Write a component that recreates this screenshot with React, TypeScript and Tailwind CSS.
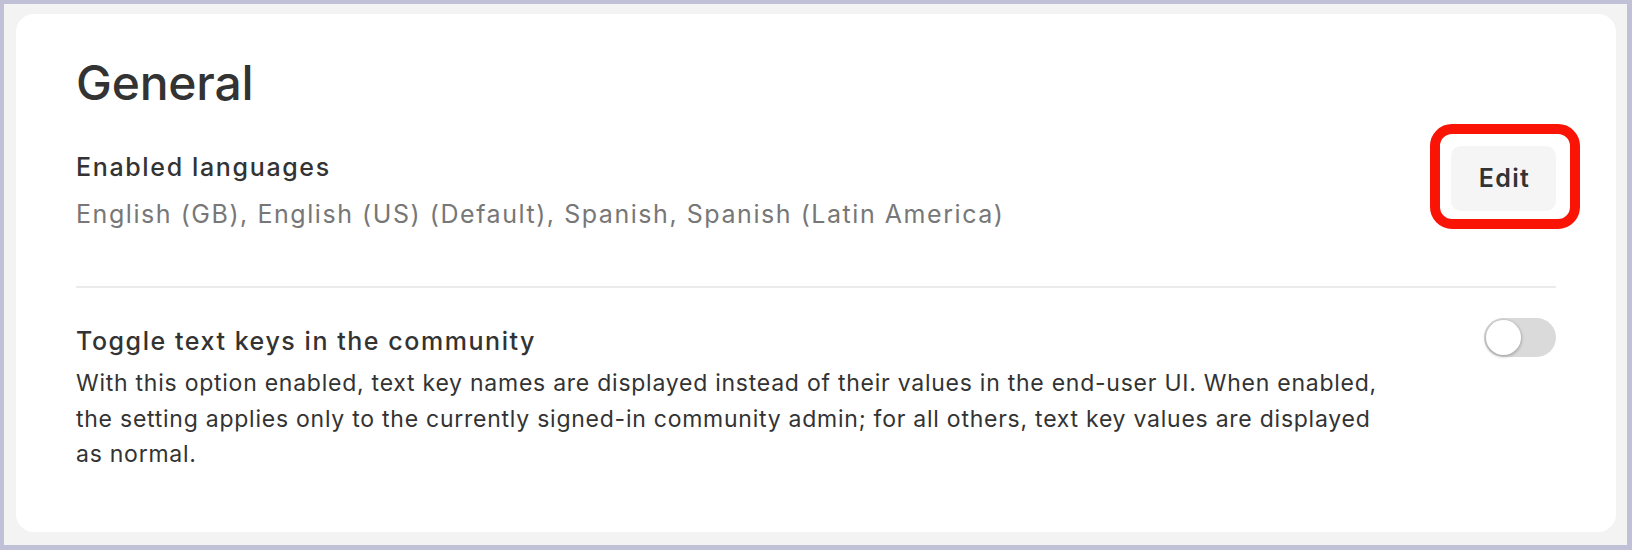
import { useState } from "react";

function Toggle() {
  const [on, setOn] = useState(false);
  return (
    <button
      onClick={() => setOn(!on)}
      className={`flex h-[39px] w-[72px] shrink-0 items-center rounded-full px-[2px] ${on ? "justify-end bg-[#2f6fed]" : "justify-start bg-[#dadada]"}`}
    >
      <span className="h-[35px] w-[35px] rounded-full bg-white shadow-[0_1px_3px_1px_rgba(0,0,0,0.22)]" />
    </button>
  );
}

export default function App() {
  return (
    <div className="h-[550px] w-[1632px] border-t-4 border-r-[5px] border-b-[5px] border-l-4 border-[#c0c0d6] bg-[#f3f3f3] pt-[10px] pr-[11px] pb-[13px] pl-3 font-['Inter',sans-serif] text-[#333333]">
      <div className="h-full rounded-[18px] bg-white px-[60px] pt-[40px]">
        <h1 className="text-[48px] font-medium leading-[58px] tracking-[-0.2px]">General</h1>

        <div className="mt-[34px] flex items-start justify-between border-b-2 border-[#ebebeb] pb-[54px]">
          <div className="pt-[3px]">
            <p className="text-[25px] font-medium leading-[36px] tracking-[1.65px]">Enabled languages</p>
            <p className="mt-[11px] text-[25px] leading-[36px] tracking-[1.55px] text-[#777777]">
              English (GB), English (US) (Default), Spanish, Spanish (Latin America)
            </p>
          </div>
          <div className="relative">
            <button className="h-[65px] w-[105px] rounded-[10px] bg-[#f5f5f5] pl-[2px] text-[25px] font-semibold tracking-[1.4px] text-[#333333]">
              Edit
            </button>
            <div className="pointer-events-none absolute -top-[22px] -right-[24px] -bottom-[18px] -left-[21px] rounded-[22px] border-[10px] border-[#fa1405]" />
          </div>
        </div>

        <div className="mt-[30px] flex items-start justify-between">
          <div className="w-[1313px]">
            <p className="pt-[5px] text-[25px] font-medium leading-[36px] tracking-[1.55px]">
              Toggle text keys in the community
            </p>
            <p className="mt-[7px] text-[23px] leading-[35.5px] tracking-[0.75px]">
              With this option enabled, text key names are displayed instead of their values in the end-user UI. When
              enabled, the setting applies only to the currently signed-in community admin; for all others, text key
              values are displayed as normal.
            </p>
          </div>
          <Toggle />
        </div>
      </div>
    </div>
  );
}
